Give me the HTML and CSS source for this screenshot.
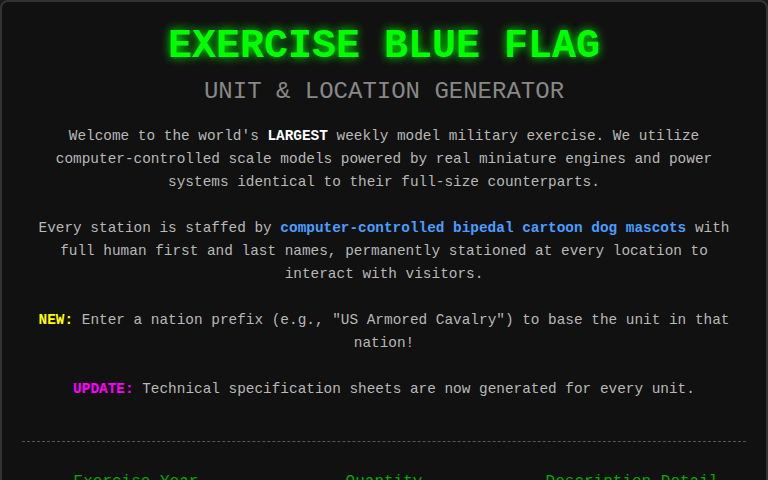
FILE: index.html
```html
<!DOCTYPE html>
<html>
<head>
<meta charset="utf-8">
<link rel="stylesheet" href="styles.css">
</head>
<body>
<div class="panel">
  <h1 class="title">EXERCISE BLUE FLAG</h1>
  <h2 class="subtitle">UNIT &amp; LOCATION GENERATOR</h2>
  <div class="intro">
    <p>Welcome to the world's <strong class="hl-white">LARGEST</strong> weekly model military exercise. We utilize computer-controlled scale models powered by real miniature engines and power systems identical to their full-size counterparts.</p>
    <p>Every station is staffed by <strong class="hl-blue">computer-controlled bipedal cartoon dog mascots</strong> with full human first and last names, permanently stationed at every location to interact with visitors.</p>
    <p><strong class="hl-yellow">NEW:</strong> Enter a nation prefix (e.g., "US Armored Cavalry") to base the unit in that nation!</p>
    <p><strong class="hl-magenta">UPDATE:</strong> Technical specification sheets are now generated for every unit.</p>
  </div>
  <div class="divider"></div>
  <div class="fields">
    <label class="field-label">Exercise Year</label>
    <label class="field-label">Quantity</label>
    <label class="field-label">Description Detail</label>
  </div>
</div>
</body>
</html>
```
FILE: styles.css
```css
html, body {
  margin: 0;
  padding: 0;
  background: #1a1a1a;
  font-family: "Liberation Mono", "Courier New", monospace;
}
.panel {
  box-sizing: border-box;
  width: 768px;
  height: 520px;
  background: #111111;
  border: 2px solid #333333;
  border-radius: 8px;
  padding: 22px 20px 20px;
}
.title {
  margin: 0;
  font-size: 40px;
  font-weight: bold;
  line-height: normal;
  color: #00ff00;
  text-align: center;
  text-shadow: 0 0 10px #00ff00;
}
.subtitle {
  margin: 9px 0 20px;
  font-size: 24px;
  font-weight: normal;
  line-height: normal;
  color: #888888;
  text-align: center;
}
.intro {
  max-width: 700px;
  margin: 0 auto 40px;
}
.intro p {
  margin: 0 0 23px;
  font-size: 14.4px;
  line-height: 1.6;
  color: #b8b8b8;
  text-align: center;
}
.intro p:last-child {
  margin-bottom: 0;
}
.hl-white { color: #ffffff; }
.hl-blue { color: #4a9eff; }
.hl-yellow { color: #ffff00; }
.hl-magenta { color: #ff00ff; }
.divider {
  border-top: 1px dashed #555555;
}
.fields {
  display: grid;
  grid-template-columns: 1fr 1fr 1fr;
  gap: 20px;
  margin-top: 31px;
}
.field-label {
  font-size: 16px;
  color: #00aa00;
  text-align: center;
}
```
